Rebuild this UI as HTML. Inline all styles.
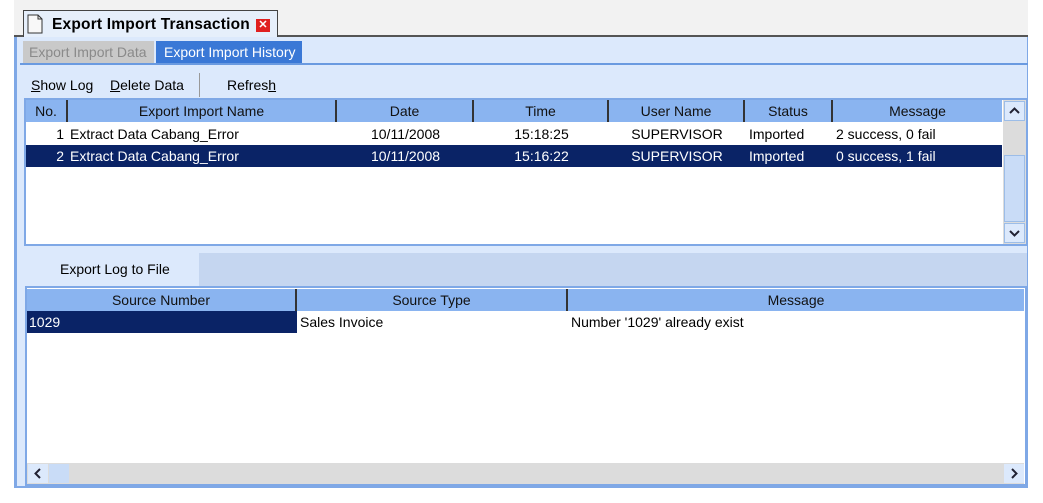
<!DOCTYPE html>
<html><head><style>
*{box-sizing:border-box;margin:0;padding:0}
body{width:1043px;height:503px;background:#fff;position:relative;overflow:hidden;font-family:"Liberation Sans",Arial,sans-serif;font-size:14px;color:#000}
.a{position:absolute}
.hd{background:#8ab4f0;color:#111;text-align:center;line-height:22px;font-size:14px;border-right:2px solid #333}
.c{position:absolute;line-height:22px;white-space:nowrap;font-size:14px}
.sel{background:#0a2366;color:#fff}
</style></head><body>
<div class="a" style="left:14px;top:0;width:1014px;height:37px;background:#f2f2f2"></div>
<div class="a" style="left:14px;top:35px;width:1014px;height:2px;background:#555"></div>
<div class="a" style="left:23px;top:10px;width:255px;height:28px;background:#e6effb;border:1px solid #444;border-bottom:none"></div>
<svg class="a" style="left:27px;top:14px" width="16" height="20"><path d="M1 1h10l4 4v14H1z" fill="#f8f8f8" stroke="#333"/><path d="M11 1v4h4" fill="none" stroke="#333"/></svg>
<div class="a" style="left:52px;top:16px;font-weight:bold;font-size:15.5px;letter-spacing:.2px">Export Import Transaction</div>
<div class="a" style="left:256px;top:19px;width:14px;height:13px;background:#e02020;color:#fff;font-size:11px;font-weight:bold;line-height:13px;text-align:center">✕</div>
<div class="a" style="left:14px;top:37px;width:1014px;height:451px;background:#dce9fc;border-left:3px solid #7fa8e6;border-right:1px solid #7fa8e6;border-bottom:2px solid #7fa8e6"></div>
<div class="a" style="left:23px;top:41px;width:131px;height:22px;background:#c9c9c9;color:#8a8a8a;line-height:22px;padding-left:6px">Export Import Data</div>
<div class="a" style="left:156px;top:41px;width:146px;height:22px;background:#3a78d6;color:#fff;line-height:22px;padding-left:8px">Export Import History</div>
<div class="a" style="left:20px;top:63px;width:1008px;height:2px;background:#6a9ae0"></div>
<div class="a" style="left:31px;top:77px"><u>S</u>how Log</div>
<div class="a" style="left:110px;top:77px"><u>D</u>elete Data</div>
<div class="a" style="left:199px;top:73px;width:1px;height:24px;background:#999"></div>
<div class="a" style="left:227px;top:77px">Refres<u>h</u></div>
<div class="a" style="left:24px;top:98px;width:1004px;height:148px;background:#fff;border:2px solid #7fa8e6"></div>
<div class="a" style="left:26px;top:100px;width:976px;height:22px;background:#8ab4f0"></div>
<div class="a hd" style="left:26px;top:100px;width:42px">No.</div>
<div class="a hd" style="left:68px;top:100px;width:269px">Export Import Name</div>
<div class="a hd" style="left:337px;top:100px;width:137px">Date</div>
<div class="a hd" style="left:474px;top:100px;width:135px">Time</div>
<div class="a hd" style="left:609px;top:100px;width:136px">User Name</div>
<div class="a hd" style="left:745px;top:100px;width:88px">Status</div>
<div class="a hd" style="left:833px;top:100px;width:169px;border-right:none">Message</div>
<div class="a sel" style="left:26px;top:145px;width:976px;height:22px"></div>
<div class="c" style="left:26px;top:123px;width:38px;text-align:right">1</div>
<div class="c" style="left:70px;top:123px">Extract Data Cabang_Error</div>
<div class="c" style="left:337px;top:123px;width:137px;text-align:center">10/11/2008</div>
<div class="c" style="left:474px;top:123px;width:135px;text-align:center">15:18:25</div>
<div class="c" style="left:609px;top:123px;width:136px;text-align:center">SUPERVISOR</div>
<div class="c" style="left:749px;top:123px">Imported</div>
<div class="c" style="left:836px;top:123px">2 success, 0 fail</div>
<div class="c" style="left:26px;top:145px;width:38px;text-align:right;color:#fff">2</div>
<div class="c" style="left:70px;top:145px;color:#fff">Extract Data Cabang_Error</div>
<div class="c" style="left:337px;top:145px;width:137px;text-align:center;color:#fff">10/11/2008</div>
<div class="c" style="left:474px;top:145px;width:135px;text-align:center;color:#fff">15:16:22</div>
<div class="c" style="left:609px;top:145px;width:136px;text-align:center;color:#fff">SUPERVISOR</div>
<div class="c" style="left:749px;top:145px;color:#fff">Imported</div>
<div class="c" style="left:836px;top:145px;color:#fff">0 success, 1 fail</div>
<div class="a" style="left:1003px;top:100px;width:23px;height:144px;background:#dcdcdc"></div>
<div class="a" style="left:1004px;top:101px;width:21px;height:20px;background:#dce9fc;border:1px solid #9cbde8"></div>
<svg class="a" style="left:1008px;top:105px" width="13" height="12"><path d="M2 8l4.5-4.5L11 8" fill="none" stroke="#223" stroke-width="2"/></svg>
<div class="a" style="left:1004px;top:155px;width:21px;height:67px;background:#c9dcf7;border:1px solid #9cbde8"></div>
<div class="a" style="left:1004px;top:223px;width:21px;height:20px;background:#dce9fc;border:1px solid #9cbde8"></div>
<svg class="a" style="left:1008px;top:227px" width="13" height="12"><path d="M2 4l4.5 4.5L11 4" fill="none" stroke="#223" stroke-width="2"/></svg>
<div class="a" style="left:25px;top:253px;width:1002px;height:33px;background:#c5d6f0"></div>
<div class="a" style="left:25px;top:253px;width:174px;height:33px;background:#dce9fc;line-height:33px;padding-left:35px">Export Log to File</div>
<div class="a" style="left:25px;top:286px;width:1002px;height:200px;background:#fff;border:2px solid #7fa8e6"></div>
<div class="a hd" style="left:27px;top:289px;width:270px">Source Number</div>
<div class="a hd" style="left:297px;top:289px;width:271px">Source Type</div>
<div class="a hd" style="left:568px;top:289px;width:456px;border-right:none">Message</div>
<div class="a sel" style="left:27px;top:311px;width:270px;height:22px"></div>
<div class="c" style="left:29px;top:311px;color:#fff">1029</div>
<div class="c" style="left:300px;top:311px">Sales Invoice</div>
<div class="c" style="left:571px;top:311px">Number '1029' already exist</div>
<div class="a" style="left:27px;top:463px;width:997px;height:21px;background:#dcdcdc"></div>
<div class="a" style="left:28px;top:464px;width:20px;height:19px;background:#dce9fc"></div>
<svg class="a" style="left:32px;top:467px" width="12" height="13"><path d="M8 2L3.5 6.5 8 11" fill="none" stroke="#223" stroke-width="2"/></svg>
<div class="a" style="left:49px;top:464px;width:20px;height:19px;background:#c9dcf7"></div>
<div class="a" style="left:1004px;top:464px;width:20px;height:19px;background:#dce9fc"></div>
<svg class="a" style="left:1008px;top:467px" width="12" height="13"><path d="M4 2l4.5 4.5L4 11" fill="none" stroke="#223" stroke-width="2"/></svg>
</body></html>
